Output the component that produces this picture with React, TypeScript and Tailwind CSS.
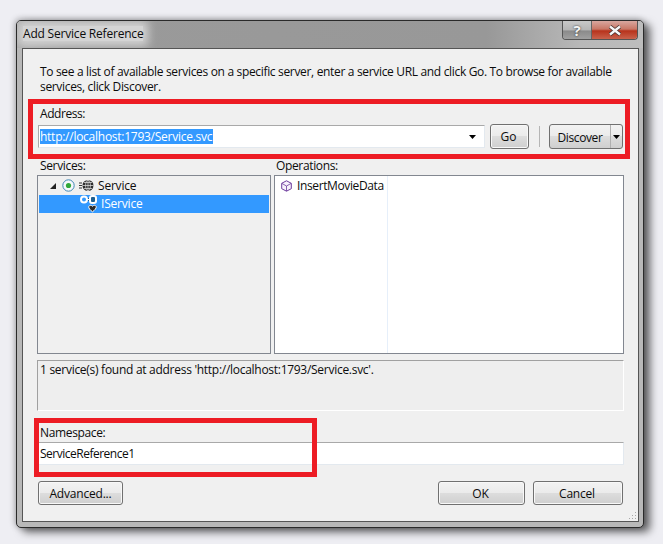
import type { ReactNode } from 'react'

function Btn({ className = '', children }: { className?: string; children: ReactNode }) {
  return (
    <div
      className={`flex items-center justify-center rounded-[3px] border border-[#707070] bg-[linear-gradient(#f2f2f2_0%,#ebebeb_48%,#dddddd_50%,#cfcfcf_100%)] shadow-[inset_0_0_0_1px_#f8f8f8] ${className}`}
    >
      {children}
    </div>
  )
}

function ArrowDown() {
  return (
    <svg width="7" height="4" viewBox="0 0 7 4" aria-hidden>
      <path d="M0 0h7L3.5 4z" fill="#000" />
    </svg>
  )
}

function ServiceIcon() {
  return (
    <svg width="32" height="16" viewBox="0 0 32 16" fill="none" aria-hidden className="shrink-0">
      <circle cx="6.5" cy="7.5" r="5.7" fill="#f4f8fb" stroke="#3f87b5" />
      <circle cx="6.500" cy="7.500" r="2.600" fill="#2fa83a" />
      <path d="M17 5h3M17 7.500h3M17 10h3" stroke="#333" />
      <circle cx="26" cy="7.500" r="5.500" fill="#2e2e2e" />
      <path d="M20.500 7.500h11M26 2v11M22 4.500h8M22 10.500h8" stroke="#e8e8e8" strokeWidth="0.7" />
      <ellipse cx="26" cy="7.500" rx="2.400" ry="5.500" stroke="#e8e8e8" strokeWidth="0.7" />
    </svg>
  )
}

function ContractIcon() {
  return (
    <svg width="17" height="18" viewBox="0 0 17 18" fill="none" aria-hidden className="shrink-0">
      <path d="M6 4.500h5" stroke="#1f5f8f" strokeWidth="3" />
      <path d="M6 4.500h5" stroke="#fff" strokeWidth="1" />
      <circle cx="4" cy="4.500" r="3" fill="#3399ff" stroke="#fff" strokeWidth="2" />
      <rect x="10" y="1" width="6" height="7" rx="2" fill="#1f5f8f" stroke="#fff" strokeWidth="2" />
      <path d="M8.800 11.500c.8-1.600 2.500-1.400 3.700-.3 1.200-1.100 2.900-1.300 3.700.3.600 1.600-1.900 4-3.700 5.300-1.800-1.300-4.300-3.700-3.700-5.300z" fill="#2c2c2c" stroke="#fff" strokeWidth="1" />
    </svg>
  )
}

function MethodIcon() {
  return (
    <svg width="11" height="12" viewBox="0 0 11 12" fill="none" aria-hidden className="shrink-0">
      <path d="M5.500.8 10.300 3.300v5.400L5.500 11.200.7 8.700V3.300z" fill="#f6f0fb" stroke="#6c3a9c" />
      <path d="M.9 3.400 5.500 6l4.600-2.600M5.500 6v5" stroke="#6c3a9c" strokeWidth="0.8" />
    </svg>
  )
}

export default function App() {
  return (
    <div className="relative h-[544px] w-[663px] overflow-hidden bg-[#eeeef3] pl-[16px] pt-[20px] font-['Open_Sans','Noto_Sans',sans-serif] text-[12px] leading-[15px] text-[#0c0c0c]">
      {/* aero window frame */}
      <div className="flex h-[508px] w-[628px] flex-col rounded-[5px] border border-[#2a2a2a] bg-[#b8b8b8] px-[5px] pb-[5px] shadow-[6px_4px_9px_rgba(0,0,0,0.6),-1px_-1px_6px_rgba(0,0,0,0.3)]">
        <div className="-mx-[5px] flex h-[27px] shrink-0 justify-between overflow-hidden rounded-t-[4px] bg-[linear-gradient(90deg,#a8a8a8_0%,#9a9a9a_8%,#989898_75%,#b8b8b8_90%,#bdbdbd_100%)] pl-[6px] pr-[5px]">
          <span className="mt-[5px] h-[15px] bg-[#d4d4d4] tracking-[-0.2px] shadow-[0_0_10px_5px_#d4d4d4]">Add Service Reference</span>
          <div className="flex h-[19px] overflow-hidden rounded-b-[4px] border border-t-0 border-[#555]">
            <div className="flex w-[28px] items-center justify-center bg-[linear-gradient(#c8c8c8_0%,#b5b5b5_50%,#8a8a8a_55%,#a0a0a0_100%)] text-[15px] font-bold leading-[18px] text-[#f4f4f4] [text-shadow:0_0_2px_#222]">
              ?
            </div>
            <div className="flex w-[46px] items-center justify-center border-l border-[#666] bg-[linear-gradient(#d8a79f_0%,#c87766_45%,#b8331c_55%,#c9624c_100%)]">
              <svg width="16" height="11" viewBox="0 0 16 11" aria-hidden>
                <path d="M3 1.500 13 9.500M13 1.500 3 9.500" stroke="#44302c" strokeWidth="4" />
                <path d="M3 1.500 13 9.500M13 1.500 3 9.500" stroke="#f7f7f7" strokeWidth="2.400" />
              </svg>
            </div>
          </div>
        </div>

        <div className="relative flex h-[474px] w-[617px] shrink-0 flex-col border border-[#555] bg-[#f0f0f0] px-[14px] pt-[15px]">
          <p className="ml-[3px] w-[590px] tracking-[-0.33px]">
            To see a list of available services on a specific server, enter a service URL and click Go. To browse for available
            services, click Discover.
          </p>

          <div className="ml-[3px] mt-[12px] tracking-[-0.45px]">Address:</div>

          <div className="mt-[3px] flex h-[25px] items-center">
            <div className="ml-[1px] flex h-[23px] w-[447px] items-center border border-[#a9a9a9] border-b-[#e3e9ef] border-r-[#e3e9ef] bg-white pl-[1px] pr-[8px]">
              <span className="bg-[#3399ff] pr-[1px] tracking-[-0.26px] text-white">http://localhost:1793/Service.svc</span>
              <span className="ml-auto">
                <ArrowDown />
              </span>
            </div>
            <Btn className="ml-[5px] h-[25px] w-[39px] pb-[1px] pr-[2px]">Go</Btn>
            <div className="ml-[10px] h-[21px] w-px bg-[#b5b5b5]" />
            <div className="ml-[9px] flex h-[25px] w-[74px] overflow-hidden rounded-[3px] border border-[#707070] bg-[linear-gradient(#f2f2f2_0%,#ebebeb_48%,#dddddd_50%,#cfcfcf_100%)]">
              <span className="flex w-[60px] items-center justify-center pt-[1px] tracking-[-0.4px]">Discover</span>
              <span className="flex flex-1 items-center justify-center border-l border-[#b0b0b0]">
                <ArrowDown />
              </span>
            </div>
          </div>

          <div className="mt-[9px] flex tracking-[-0.35px]">
            <span className="ml-[3px] w-[236px]">Services:</span>
            <span>Operations:</span>
          </div>

          <div className="mt-[2px] flex h-[179px] gap-[3px]">
            <div className="w-[234px] border border-[#828790] bg-[#f0f0f0] p-px">
              <div className="flex h-[18px] items-center pl-[11px]">
                <svg width="6" height="6" viewBox="0 0 6 6" aria-hidden className="shrink-0">
                  <path d="M6 0v6H0z" fill="#222" />
                </svg>
                <span className="ml-[6px]">
                  <ServiceIcon />
                </span>
                <span className="mb-[2px] ml-[4px] tracking-[-0.2px]">Service</span>
              </div>
              <div className="flex h-[18px] items-center bg-[#3399ff] pl-[41px] text-white">
                <ContractIcon />
                <span className="mb-[2px] ml-[4px] tracking-[-0.2px]">IService</span>
              </div>
            </div>
            <div className="flex w-[350px] border border-[#828790] bg-white">
              <div className="flex h-full w-[113px] items-start border-r border-[#e6effa] pl-[6px] pt-[2px]">
                <span className="mt-[2px]">
                  <MethodIcon />
                </span>
                <span className="ml-[5px] whitespace-nowrap tracking-[-0.38px]">InsertMovieData</span>
              </div>
            </div>
          </div>

          <div className="mt-[6px] h-[51px] w-[587px] border border-[#a0a0a0] border-b-white border-r-white bg-[#eeeeee] pl-[2px] pt-[1px] tracking-[-0.28px]">
            1 service(s) found at address 'http://localhost:1793/Service.svc'.
          </div>

          <div className="ml-[3px] mt-[14px] tracking-[-0.35px]">Namespace:</div>

          <div className="mt-[2px] flex h-[23px] w-[587px] items-center border border-[#a9a9a9] border-b-[#e3e9ef] border-r-[#e3e9ef] bg-white pl-[2px] tracking-[-0.5px]">
            ServiceReference1
          </div>

          <div className="ml-[1px] mt-[16px] flex h-[24px] w-[585px] tracking-[-0.2px]">
            <Btn className="w-[85px]">Advanced...</Btn>
            <Btn className="ml-auto w-[87px] border-[#2c8fc4] pr-[2px] shadow-[inset_0_0_0_1px_#6fd0f2]">OK</Btn>
            <Btn className="ml-[8px] w-[90px] pr-[2px]">Cancel</Btn>
          </div>

          <svg width="9" height="9" viewBox="0 0 9 9" aria-hidden className="absolute bottom-px right-px">
            <path d="M7 1h1v1H7zM4 4h1v1H4zM7 4h1v1H7zM1 7h1v1H1zM4 7h1v1H4zM7 7h1v1H7z" fill="#a8a8a8" />
          </svg>
        </div>
      </div>

      {/* red annotation boxes drawn over the screenshot */}
      <div className="absolute left-[28px] top-[99px] h-[60px] w-[602px] border-[5px] border-[#ed1c24]" />
      <div className="absolute left-[34px] top-[418px] h-[59px] w-[283px] border-[5px] border-[#ed1c24]" />
    </div>
  )
}
